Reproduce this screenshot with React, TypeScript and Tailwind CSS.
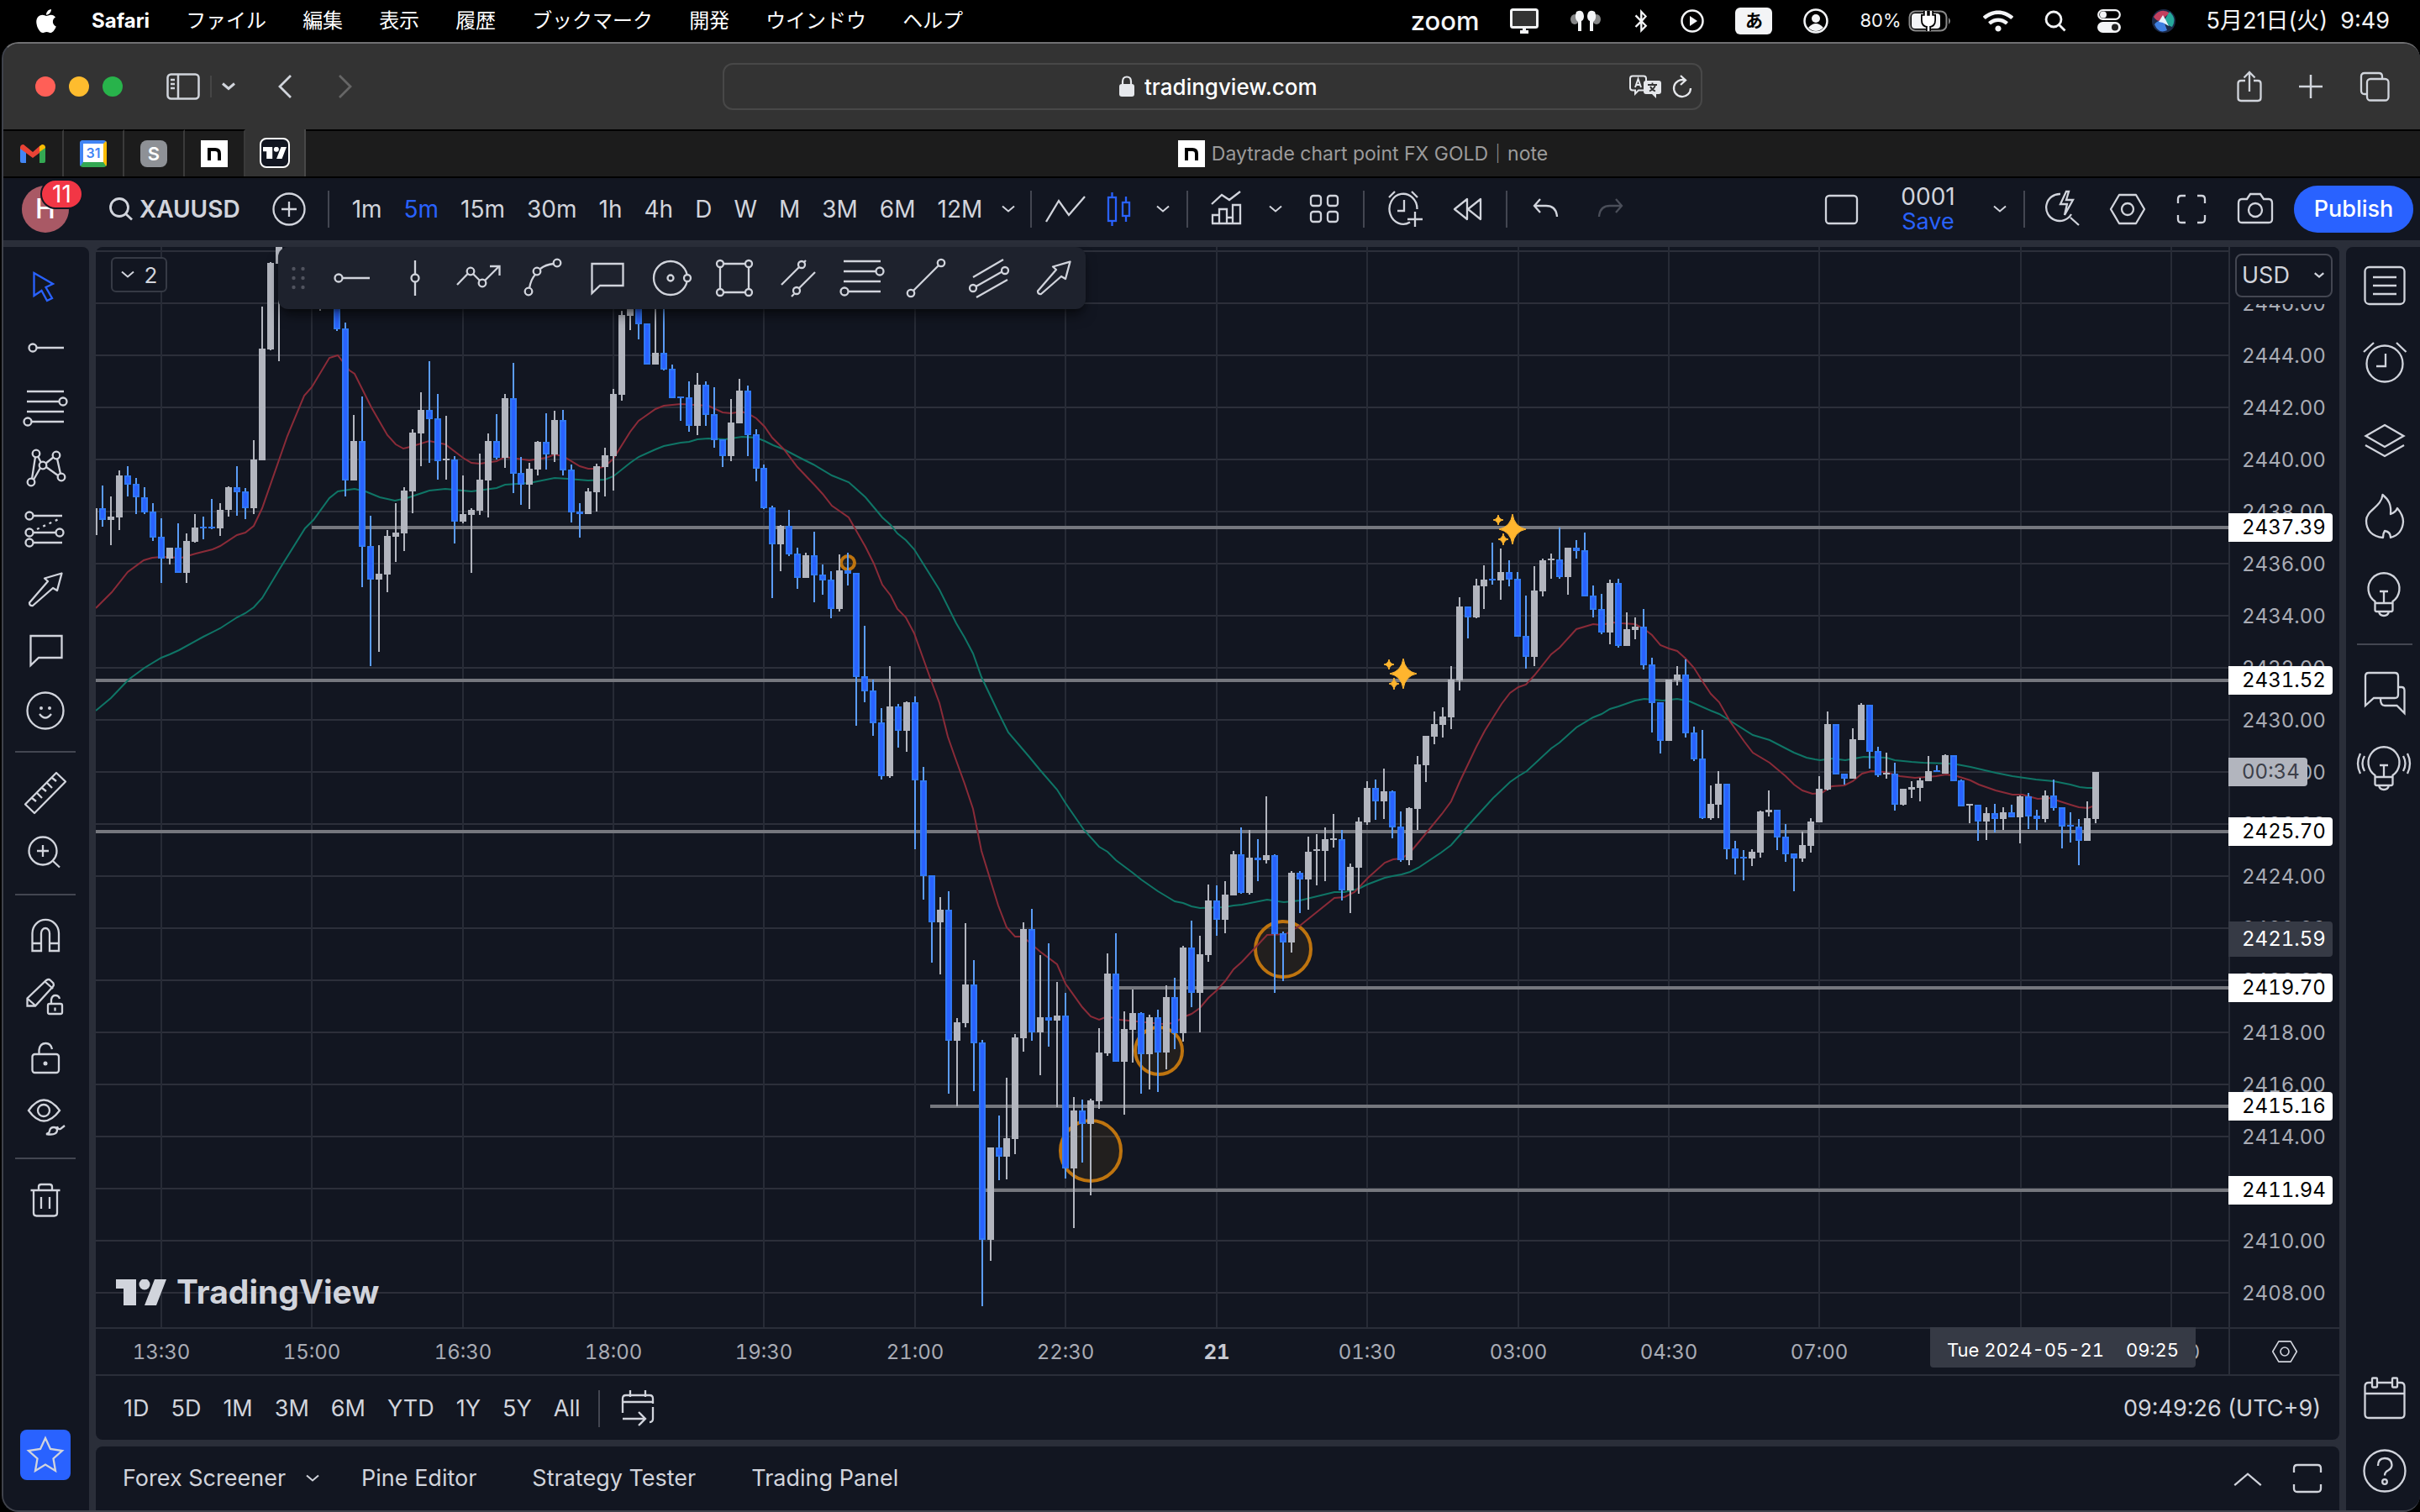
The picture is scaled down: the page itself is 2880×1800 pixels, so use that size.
import type { ReactNode } from "react";
import clsx from "clsx";
import { FaApple, FaBluetoothB, FaWifi } from "react-icons/fa";

type Candle = ["u" | "d", number, number, number, number];

// chart space: one unit is one pixel of the full-size window
const CHART = { x: 114, y: 294, w: 2538, h: 1286 };

const FIRST_INDEX = -8;
const candleX = (i: number) => Math.round(192 + (i + FIRST_INDEX) * 9.965);
const priceY = (price: number) => 361 + (2446 - price) * 31;

// direction, high, body top, body bottom, low
const candles: Candle[] = [
  ["u", 605, 605, 637, 637], ["d", 578, 605, 619, 627], ["u", 591, 615, 619, 649], ["u", 560, 566, 616, 631],
  ["d", 555, 566, 577, 591], ["d", 569, 576, 592, 612], ["d", 580, 592, 610, 612], ["d", 599, 609, 640, 644],
  ["d", 617, 639, 665, 694], ["u", 652, 652, 665, 672], ["d", 623, 652, 682, 682], ["u", 635, 644, 682, 694],
  ["u", 612, 628, 645, 646], ["d", 615, 627, 629, 642], ["d", 594, 627, 629, 630], ["u", 599, 607, 629, 638],
  ["u", 579, 580, 607, 615], ["d", 555, 580, 586, 614], ["d", 581, 585, 605, 618], ["u", 524, 547, 605, 612],
  ["u", 365, 415, 548, 548], ["u", 312, 313, 416, 417], ["u", 280, 284, 314, 430], ["d", 296, 300, 330, 350],
  ["u", 296, 305, 340, 352], ["d", 298, 305, 335, 350], ["u", 300, 310, 340, 355], ["u", 300, 312, 350, 370],
  ["d", 300, 312, 340, 360], ["d", 310, 330, 392, 394], ["d", 384, 391, 572, 591], ["u", 494, 525, 572, 572],
  ["d", 472, 525, 651, 699], ["d", 614, 650, 690, 793], ["u", 649, 683, 690, 776], ["u", 631, 638, 684, 705],
  ["u", 599, 634, 639, 669], ["u", 580, 584, 635, 656], ["u", 511, 515, 585, 611], ["u", 467, 488, 516, 555],
  ["d", 430, 488, 499, 551], ["d", 469, 498, 549, 571], ["u", 495, 546, 548, 571], ["d", 543, 547, 621, 647],
  ["u", 566, 612, 621, 623], ["u", 605, 607, 613, 682], ["u", 540, 571, 608, 613], ["u", 516, 525, 572, 616],
  ["d", 493, 525, 545, 547], ["u", 469, 474, 545, 557], ["d", 432, 474, 564, 587], ["d", 544, 563, 577, 601],
  ["u", 551, 558, 577, 606], ["u", 525, 526, 559, 566], ["d", 492, 526, 541, 559], ["u", 489, 500, 541, 550],
  ["d", 488, 500, 560, 566], ["d", 553, 559, 610, 622], ["d", 599, 609, 612, 640], ["u", 581, 585, 612, 612],
  ["u", 552, 555, 586, 609], ["u", 533, 542, 556, 591], ["u", 463, 469, 543, 584], ["u", 370, 375, 470, 477],
  ["u", 340, 350, 376, 393], ["d", 340, 350, 386, 404], ["d", 385, 385, 434, 434], ["u", 350, 420, 434, 434],
  ["d", 350, 420, 440, 441], ["d", 434, 439, 474, 474], ["d", 472, 472, 474, 501], ["d", 454, 473, 507, 514],
  ["u", 444, 458, 507, 518], ["d", 454, 458, 494, 507], ["d", 461, 493, 524, 533], ["d", 523, 523, 543, 556],
  ["u", 475, 503, 543, 549], ["u", 451, 465, 504, 504], ["d", 459, 465, 518, 543], ["d", 511, 517, 558, 573],
  ["d", 553, 557, 605, 606], ["d", 602, 604, 648, 712], ["u", 625, 626, 648, 680], ["d", 607, 626, 660, 662],
  ["d", 652, 659, 688, 701], ["u", 658, 661, 688, 688], ["d", 633, 661, 685, 717], ["d", 672, 684, 691, 708],
  ["d", 680, 690, 725, 736], ["u", 660, 679, 725, 728], ["d", 658, 679, 683, 697], ["d", 682, 682, 806, 864],
  ["d", 745, 805, 823, 836], ["d", 809, 822, 861, 876], ["d", 843, 860, 924, 928], ["u", 793, 841, 924, 926],
  ["d", 838, 841, 870, 890], ["u", 835, 836, 870, 895], ["d", 829, 836, 929, 1011], ["d", 913, 929, 1043, 1071],
  ["d", 1042, 1042, 1098, 1146], ["u", 1068, 1083, 1098, 1160], ["d", 1061, 1083, 1239, 1302], ["u", 1212, 1217, 1239, 1317],
  ["u", 1099, 1172, 1218, 1223], ["d", 1143, 1172, 1242, 1299], ["d", 1238, 1241, 1476, 1555], ["u", 1366, 1366, 1476, 1501],
  ["d", 1328, 1366, 1377, 1405], ["u", 1283, 1355, 1377, 1404], ["u", 1231, 1235, 1356, 1374], ["u", 1098, 1106, 1236, 1252],
  ["d", 1082, 1106, 1229, 1239], ["u", 1137, 1211, 1229, 1280], ["d", 1123, 1211, 1215, 1246], ["u", 1169, 1209, 1215, 1318],
  ["d", 1182, 1209, 1391, 1403], ["u", 1306, 1322, 1391, 1462], ["d", 1309, 1322, 1338, 1384], ["u", 1308, 1310, 1338, 1423],
  ["u", 1224, 1253, 1311, 1320], ["u", 1135, 1159, 1254, 1257], ["d", 1111, 1159, 1264, 1264], ["u", 1204, 1225, 1264, 1327],
  ["u", 1178, 1206, 1226, 1265], ["d", 1205, 1206, 1255, 1302], ["u", 1208, 1211, 1255, 1297], ["d", 1202, 1211, 1253, 1300],
  ["u", 1173, 1187, 1253, 1273], ["d", 1164, 1187, 1230, 1249], ["u", 1126, 1128, 1230, 1240], ["d", 1096, 1128, 1182, 1199],
  ["u", 1114, 1136, 1182, 1229], ["u", 1053, 1072, 1137, 1145], ["d", 1054, 1072, 1095, 1114], ["u", 1049, 1065, 1095, 1111],
  ["u", 1013, 1017, 1066, 1066], ["d", 985, 1017, 1063, 1064], ["u", 988, 1021, 1063, 1065], ["d", 999, 1021, 1024, 1049],
  ["u", 948, 1018, 1024, 1028], ["d", 1017, 1018, 1112, 1182], ["d", 1109, 1111, 1122, 1168], ["u", 1037, 1039, 1122, 1134],
  ["d", 1037, 1039, 1047, 1087], ["u", 996, 1014, 1047, 1083], ["u", 993, 1011, 1013, 1054], ["u", 985, 999, 1013, 1049],
  ["u", 969, 998, 1000, 1009], ["d", 988, 999, 1060, 1072], ["u", 1028, 1032, 1060, 1087], ["u", 973, 978, 1033, 1064],
  ["u", 930, 938, 979, 982], ["d", 928, 938, 954, 976], ["u", 915, 942, 954, 975], ["d", 941, 942, 985, 998],
  ["d", 966, 984, 1024, 1026], ["u", 961, 962, 1024, 1030], ["u", 900, 910, 963, 988], ["u", 876, 876, 911, 931],
  ["u", 847, 862, 877, 886], ["u", 842, 853, 863, 878], ["u", 793, 809, 854, 868], ["u", 711, 722, 810, 822],
  ["d", 722, 722, 735, 760], ["u", 689, 697, 735, 736], ["u", 673, 690, 698, 725], ["d", 646, 689, 691, 696],
  ["u", 653, 681, 691, 714], ["d", 667, 681, 690, 698], ["d", 681, 689, 758, 758], ["d", 709, 757, 782, 796],
  ["u", 674, 703, 782, 793], ["u", 665, 667, 704, 710], ["u", 659, 665, 667, 689], ["d", 628, 666, 687, 689],
  ["u", 652, 652, 687, 708], ["d", 643, 652, 656, 665], ["d", 634, 655, 710, 710], ["d", 697, 709, 726, 735],
  ["d", 707, 725, 753, 755], ["u", 690, 694, 753, 767], ["d", 689, 694, 769, 771], ["u", 729, 749, 769, 769],
  ["u", 735, 746, 750, 761], ["d", 725, 746, 792, 797], ["d", 783, 791, 837, 872], ["d", 836, 836, 882, 897],
  ["u", 809, 809, 882, 882], ["u", 793, 803, 810, 816], ["d", 785, 803, 873, 878], ["d", 865, 872, 904, 906],
  ["d", 869, 903, 974, 975], ["u", 935, 957, 974, 976], ["u", 918, 933, 958, 974], ["d", 933, 933, 1011, 1023],
  ["d", 1001, 1010, 1022, 1041], ["d", 1012, 1020, 1022, 1048], ["u", 1011, 1014, 1022, 1031], ["u", 965, 966, 1015, 1021],
  ["u", 941, 964, 967, 972], ["d", 964, 964, 997, 1012], ["d", 981, 996, 1017, 1026], ["d", 1016, 1016, 1022, 1061],
  ["u", 990, 1006, 1022, 1026], ["u", 974, 978, 1007, 1015], ["u", 924, 939, 979, 979], ["u", 847, 862, 940, 941],
  ["d", 862, 862, 922, 922], ["d", 921, 921, 927, 934], ["u", 867, 880, 927, 927], ["u", 837, 839, 881, 881],
  ["d", 839, 839, 895, 915], ["d", 889, 894, 923, 925], ["u", 896, 920, 922, 927], ["d", 908, 921, 958, 965],
  ["u", 939, 939, 958, 959], ["u", 930, 937, 940, 950], ["u", 926, 929, 938, 954], ["u", 900, 918, 930, 930],
  ["d", 911, 917, 919, 919], ["u", 898, 899, 921, 921], ["d", 899, 899, 930, 930], ["d", 928, 929, 960, 960],
  ["u", 957, 957, 959, 980], ["d", 958, 958, 978, 1001], ["u", 961, 968, 978, 1000], ["d", 957, 968, 975, 991],
  ["u", 961, 967, 975, 988], ["d", 958, 967, 973, 973], ["u", 947, 948, 973, 1004], ["d", 944, 948, 972, 987],
  ["d", 964, 971, 975, 988], ["u", 941, 947, 975, 979], ["d", 928, 947, 962, 965], ["d", 961, 961, 984, 1010],
  ["d", 967, 982, 984, 1003], ["d", 975, 984, 1001, 1030], ["u", 954, 974, 1001, 1001], ["u", 919, 919, 975, 980],
];

const fastAverage =
  "114,724 133,705 152,681 171,667 181,664 192,663 216,664 233,659 253,654 262,650 282,637 292,634 302,626 312,605 342,519 362,471 371,461 392,426 402,423 416,441 422,445 442,485 461,518 471,529 480,534 488,532 511,525 530,529 551,545 561,551 571,552 591,549 601,544 630,548 650,545 660,541 670,543 690,555 700,558 710,558 720,555 730,546 750,514 760,501 780,487 790,483 810,481 843,483 860,491 870,492 883,490 893,494 900,498 910,508 919,521 933,535 949,556 969,577 979,588 990,602 1010,616 1030,651 1040,671 1050,696 1060,709 1068,725 1078,735 1088,754 1098,782 1108,810 1118,837 1128,877 1136,900 1148,933 1158,963 1168,1013 1188,1078 1198,1104 1208,1115 1217,1115 1223,1120 1238,1133 1258,1148 1268,1171 1288,1199 1298,1210 1308,1214 1318,1210 1333,1214 1383,1219 1397,1218 1408,1211 1418,1207 1428,1200 1438,1188 1448,1179 1458,1168 1468,1154 1478,1145 1508,1113 1530,1112 1547,1102 1588,1069 1600,1068 1612,1062 1628,1045 1648,1027 1658,1023 1668,1022 1678,1015 1688,1003 1716,969 1727,954 1737,931 1747,910 1757,889 1767,870 1787,838 1797,825 1807,818 1816,815 1826,804 1846,779 1856,771 1876,749 1886,746 1896,743 1905,744 1920,741 1930,742 1946,743 1957,749 1966,756 1976,768 1986,772 1996,775 2006,784 2016,795 2026,811 2036,826 2046,836 2059,859 2076,883 2086,896 2106,908 2125,924 2135,934 2145,941 2157,945 2168,944 2180,936 2195,935 2205,930 2216,921 2227,918 2243,919 2261,924 2279,926 2304,924 2316,922 2329,924 2345,929 2355,934 2375,941 2395,946 2407,946 2425,951 2439,950 2464,958 2474,961 2485,962 2490,960";

const slowAverage =
  "114,846 132,831 153,809 172,795 192,783 202,779 213,774 242,758 262,748 282,735 292,730 302,723 312,712 333,677 363,629 373,619 392,593 402,585 408,584 422,582 435,585 452,592 470,596 484,593 511,584 530,582 561,585 591,581 601,577 630,575 660,569 676,570 700,572 720,571 730,567 750,551 760,544 780,535 790,531 810,527 820,526 830,523 843,522 863,523 883,520 900,521 910,525 920,530 933,535 952,545 968,553 990,566 1010,574 1030,592 1040,604 1050,616 1060,625 1068,635 1078,643 1088,654 1098,670 1118,702 1128,722 1138,742 1148,759 1158,778 1168,806 1188,848 1200,872 1224,900 1238,917 1258,940 1268,956 1290,988 1308,1008 1318,1014 1328,1024 1348,1039 1358,1047 1368,1054 1378,1061 1388,1067 1398,1073 1408,1075 1418,1079 1428,1081 1457,1080 1468,1078 1478,1077 1508,1071 1528,1074 1547,1072 1588,1062 1600,1062 1617,1058 1627,1053 1648,1045 1657,1043 1668,1041 1678,1038 1688,1033 1715,1015 1727,1006 1741,990 1757,972 1777,950 1797,931 1807,924 1817,918 1846,891 1856,884 1876,866 1896,854 1906,850 1916,844 1926,841 1946,834 1957,832 1979,834 1996,832 2011,835 2036,846 2046,850 2059,858 2086,875 2096,878 2106,881 2135,896 2150,902 2160,904 2166,905 2180,903 2196,905 2207,903 2218,901 2245,902 2255,905 2275,907 2289,908 2318,909 2329,910 2345,913 2375,920 2395,924 2423,928 2444,930 2464,934 2475,937 2484,938 2490,938";

const levels = [
  { price: "2437.39", from: 371, y: 628 },
  { price: "2431.52", from: 114, y: 810 },
  { price: "2425.70", from: 114, y: 990 },
  { price: "2419.70", from: 1318, y: 1176 },
  { price: "2415.16", from: 1107, y: 1317 },
  { price: "2411.94", from: 1169, y: 1417 },
];

const circles = [
  { x: 1009, y: 670, r: 8 },
  { x: 1298, y: 1370, r: 36 },
  { x: 1379, y: 1251, r: 28 },
  { x: 1527, y: 1130, r: 33 },
];

const timeTicks = [
  { x: 192, label: "13:30" },
  { x: 371, label: "15:00" },
  { x: 551, label: "16:30" },
  { x: 730, label: "18:00" },
  { x: 909, label: "19:30" },
  { x: 1089, label: "21:00" },
  { x: 1268, label: "22:30" },
  { x: 1448, label: "21", strong: true },
  { x: 1627, label: "01:30" },
  { x: 1807, label: "03:00" },
  { x: 1986, label: "04:30" },
  { x: 2165, label: "07:00" },
  { x: 2405, label: "" },
  { x: 2584, label: "10:30" },
];

const priceTicks = Array.from({ length: 20 }, (_, i) => 2446 - i * 2);

// these ticks sit completely behind a tag on the price axis
const coveredTicks = [2412];

/* ---------- icons ---------- */

function Icon({ children, className = "size-14" }: { children: ReactNode; className?: string }) {
  return (
    <svg viewBox="0 0 56 56" className={clsx("shrink-0", className)} fill="none" stroke="currentColor" strokeWidth="2.3" aria-hidden="true">
      {children}
    </svg>
  );
}

const icons = {
  cursor: <path d="M14.5 11 37 24l-8.500 4L36 41l-6 3-6.500-12-9 6Z" />,
  ray: <><circle cx="13" cy="28" r="4.500" /><path d="M17.500 28H50" /></>,
  vertical: <><circle cx="28" cy="28" r="4.500" /><path d="M28 7v16.500M28 32.500V49" /></>,
  fib: <><path d="M6 8h44M6 20h38.500M6 32h44M12 44h38" /><circle cx="49" cy="20" r="4.500" /><circle cx="7" cy="44" r="4.500" /></>,
  pattern: (
    <>
      <path d="M16 14 12 40M19 13l4 8M28 22l10-8M22 27 14 41M42 16l4 18M29 26l14 10" />
      <circle cx="17" cy="10" r="4.300" /><circle cx="41" cy="12" r="4.300" /><circle cx="25" cy="24" r="4.300" />
      <circle cx="11" cy="44" r="4.300" /><circle cx="47" cy="38" r="4.300" />
    </>
  ),
  forecast: (
    <>
      <path d="M14 12h34M14 32h26M14 44h34" /><path d="m18 28 28-13" strokeDasharray="3 5" />
      <circle cx="9" cy="12" r="4.500" /><circle cx="9" cy="32" r="4.500" /><circle cx="45" cy="32" r="4.500" /><circle cx="9" cy="44" r="4.500" />
    </>
  ),
  arrow: <path d="M47.500 8.500 27 14.500l4 3.500L9 43.500q0 4 4 3.500l24-21 5 3Z" strokeLinejoin="round" />,
  comment: <path d="M10.500 11h37v26H20l-9.500 9Z" />,
  smiley: (
    <>
      <circle cx="28" cy="28" r="21.500" /><path d="M21 32q7 9 14 0" />
      <circle cx="23" cy="25" r="2" fill="currentColor" stroke="none" /><circle cx="33" cy="25" r="2" fill="currentColor" stroke="none" />
    </>
  ),
  ruler: <path d="m41 4 11 10.500L15 52 4 41.500ZM12 34l5 4M18 28l6 6M24 22l5 4M30 16l6 6M36 10l5 4" strokeLinejoin="round" />,
  zoomIn: <><circle cx="25" cy="25" r="16.500" /><path d="M25 18v14M18 25h14M37 37l8 7.500" /></>,
  magnet: <path d="M12.500 46V25a15.700 16 0 0 1 31.500 0v21H33V25a5 6 0 0 0-10 0v21ZM12.500 37H23M33 37h11" />,
  pencilLock: (
    <>
      <path d="M6.500 39.500v-9L29 9q3-2 5 0l3.500 3.500q1 2-.5 4L16 39.500ZM7 31l9 8M28 11l9 8" />
      <rect x="31" y="37" width="17" height="12" rx="2" /><path d="M35 37v-5q1-5 5-5 4 0 5 4" /><path d="M39.500 41.500v4" />
    </>
  ),
  lock: (
    <>
      <rect x="12.500" y="25" width="31.500" height="22" rx="3" /><path d="M20.500 25v-5q1-8 8-8 6 0 7.500 7" />
      <circle cx="28" cy="36" r="2.500" fill="currentColor" stroke="none" />
    </>
  ),
  eyeBrush: (
    <>
      <path d="M8 20Q26-5 45 20 26 45 8 20Z" /><circle cx="26" cy="20" r="7" />
      <path d="M29 48q4-1 4-4 1-4 5-4t4 4q-1 6-13 4ZM42 39q1 4 4 3l5-4" />
    </>
  ),
  trash: <path d="M10.500 17h35M20 17v-4q0-3 3-3h10q3 0 3 3v4M14 17v27q0 3.500 3.500 3.500h21q3.500 0 3.500-3.500V17M23 25v14M33 25v14" />,
  star: <path d="m28 8 6 13 14 2-10.500 9.500L40 47l-12-7.500L16 47l2.500-14.500L8 23l14-2Z" />,
  list: <><rect x="4.500" y="6" width="47" height="44" rx="5" /><path d="M14 18h28M14 28h28M14 38h28" /></>,
  alarm: <><circle cx="28" cy="29" r="21.500" /><path d="M29 17v15H18M3 15 15 4M42 4l11.500 11" /></>,
  alarmPlus: <><path d="M36 43.500A16.500 18 0 1 1 44.500 28M29 17v13h-8M11 14l7-7M38 7l7 7M42 31v18M33 40h18" /></>,
  layers: <path d="m28 10 22.500 13L28 36 5.500 23ZM5 34l23 13 23-13" />,
  flame: <path d="M25.500 1C33 7 36 13 35 24q6-2 8-7 7 8 7 16-1 15-15 19 0-7-7-8-2 3-2 8C13 51 6 43 6 32 6 19 24 16 25.500 1Z" strokeLinejoin="round" />,
  bulb: <path d="M16.500 38V36A18.500 18.500 0 1 1 37.500 36v10q0 2-2 2h-17q-2 0-2-2V38h21M21 48q1 5 6 5t6-5M27 38V24M22 24h10" />,
  bulbSignal: (
    <g>
      <path d="M16.500 38V36A18.500 18.500 0 1 1 37.500 36v10q0 2-2 2h-17q-2 0-2-2V38h21M21 48q1 5 6 5t6-5M27 38V24M22 24h10" />
      <path d="M4 13q-5 9 0 18M-1 10q-6 12 0 24M50 13q5 9 0 18M55 10q6 12 0 24" />
    </g>
  ),
  chat: <path d="M5 43V8q0-4 4-4h31q4 0 4 4v22q0 4-4 4H15ZM44 21h4q3.500 0 3.500 4v27l-9-9H28q-5 0-5-8" />,
  calendar: (
    <>
      <path d="M13 9H9q-4.500 0-4.500 4.500v33Q4.500 51 9 51h38q4.500 0 4.500-4.500v-33Q51.500 9 47 9h-4M19 9h17M4.500 22h47" />
      <rect x="13" y="3.500" width="6" height="11" rx="1" /><rect x="37" y="3.500" width="6" height="11" rx="1" />
    </>
  ),
  help: <><circle cx="28" cy="28" r="24.500" /><path d="M20 22q0-9 8-9t8.500 8q0 4-4.500 6.500-4 2-4 6" /><circle cx="28" cy="41" r="2.800" /></>,
  zigzag: <><path d="m2 36 12.500-13M21 23l8 8M35 31l17-17M41 14h11.500v11" /><circle cx="18" cy="20" r="4.300" /><circle cx="32" cy="34" r="4.300" /></>,
  curve: <><path d="M12 40q2-11 7-16M25 17q6-5 16-6" /><circle cx="11" cy="44" r="4.300" /><circle cx="21" cy="20" r="4.300" /><circle cx="45" cy="10" r="4.300" /></>,
  circleTool: <><circle cx="28" cy="28" r="20" /><circle cx="28" cy="28" r="3.500" /><circle cx="48" cy="28" r="4" className="fill-[#1e222d]" /></>,
  square: (
    <>
      <path d="M15 11h26M15 45h26M11 15v26M45 15v26" />
      <circle cx="11" cy="11" r="4" /><circle cx="45" cy="11" r="4" /><circle cx="11" cy="45" r="4" /><circle cx="45" cy="45" r="4" />
    </>
  ),
  parallel: <><path d="m8 36 21-21M35 9l2-2M20 50l3-3M29 40l19-19" /><circle cx="32" cy="12" r="4" /><circle cx="26" cy="43" r="4" /></>,
  trend: <><path d="m13 43 30-30" /><circle cx="10" cy="46" r="4.200" /><circle cx="46" cy="10" r="4.200" /></>,
  channel: <><path d="m8 27 36-21M8 40l37-21M12 51l37-21" /><circle cx="8" cy="40" r="4" className="fill-[#1e222d]" /><circle cx="46" cy="19" r="4" className="fill-[#1e222d]" /></>,
  lineChart: <path d="m5 43 15-25 12 17L51 13" />,
  candlesIcon: <><rect x="15" y="14" width="9" height="28" /><path d="M19.500 8v6M19.500 42v6" /><rect x="32" y="20" width="8" height="16" /><path d="M36 13v7M36 36v7" /></>,
  indicators: <path d="m10 22 12-11 9 6L44 7M11 45V35h8v10M19 45V28h9v17M28 38h7v7M35 45V23h9v22H10" />,
  grid: (
    <>
      <rect x="12" y="12" width="12" height="12" rx="3" /><rect x="32" y="12" width="12" height="12" rx="3" />
      <rect x="12" y="31" width="12" height="12" rx="3" /><rect x="32" y="31" width="12" height="12" rx="3" />
    </>
  ),
  rewind: <path d="M28 16v24L13 28ZM44 16v24L29 28Z" strokeLinejoin="round" />,
  undo: <path d="m21 16-7 8 7 8M14 24h14q12 0 13 13" />,
  redo: <path d="m35 16 7 8-7 8M42 24H28q-12 0-13 13" />,
  frame: <rect x="10" y="12" width="37" height="33" rx="4" />,
  quickSearch: <path d="M24 10a16 16 0 1 0 13 24M36 38l10 9M31 7l-7 15h8l-3 13 10-18h-8l3-10Z" />,
  hexagon: <><path d="M18 11h20l10 17-10 17H18L8 28Z" strokeLinejoin="round" /><circle cx="28" cy="28" r="7" /></>,
  fullscreen: <path d="M12 21v-5q0-4 4-4h5M35 12h5q4 0 4 4v5M44 35v5q0 4-4 4h-5M21 44h-5q-4 0-4-4v-5" />,
  camera: <><path d="M8 21q0-5 4-5h6l4-6h12l4 6h6q4 0 4 5v19q0 4-4 4H12q-4 0-4-4Z" /><circle cx="28" cy="29" r="8" /></>,
  gotoDate: <path d="M9 33V16q0-4 4-4h28q4 0 4 4v6M9 20h36M18 6v8M36 6v8M9 40h26M28 32l8 8-8 8M45 26v14q0 4-4 4" />,
  panel: <path d="M12 21v-5q0-4 4-4h24q4 0 4 4v5M44 35v5q0 4-4 4H16q-4 0-4-4v-5" />,
};

type IconName = keyof typeof icons;

function Chevron({ className = "w-4" }: { className?: string }) {
  return (
    <svg viewBox="0 0 16 10" className={className} fill="none" stroke="currentColor" strokeWidth="2" aria-hidden="true">
      <path d="m1 1.500 7 6 7-6" />
    </svg>
  );
}

function TradingViewMark({ className }: { className: string }) {
  return (
    <svg viewBox="0 0 60 31" className={className} fill="currentColor" aria-hidden="true">
      <path d="M0 0h24v31H9V11H0ZM46 0h14L48 31H34Z" />
      <circle cx="34" cy="6" r="6.500" />
    </svg>
  );
}

function NoteMark() {
  return (
    <svg viewBox="0 0 32 32" className="size-8 bg-white" fill="none" stroke="#000" strokeWidth="4" aria-hidden="true">
      <path d="M10 24V11h7q5 0 5 5v8" />
    </svg>
  );
}

/* ---------- macOS menu bar ---------- */

const menus = ["ファイル", "編集", "表示", "履歴", "ブックマーク", "開発", "ウインドウ", "ヘルプ"];

function MenuBar() {
  return (
    <header className="flex h-[50px] shrink-0 items-center justify-between bg-black pl-[38px] pr-9 text-2xl text-white">
      <nav className="flex items-center gap-[43px] whitespace-nowrap">
        <FaApple className="-mr-1 h-8 w-[30px]" />
        <button className="font-bold">Safari</button>
        {menus.map((menu) => (
          <button key={menu}>{menu}</button>
        ))}
      </nav>
      <div className="flex items-center gap-[37px] whitespace-nowrap text-gray-100">
        <span className="text-[31px] font-medium leading-8">zoom</span>
        <svg viewBox="0 0 34 30" className="w-[34px]" aria-hidden="true">
          <rect x="1.500" y="1.500" width="31" height="21" rx="2" fill="#333" stroke="currentColor" strokeWidth="3" />
          <path d="M12 28h10M17 22v6" stroke="currentColor" strokeWidth="4" />
        </svg>
        <svg viewBox="0 0 38 28" className="w-[38px]" fill="currentColor" aria-hidden="true">
          <ellipse cx="6" cy="12" rx="5" ry="6" opacity=".55" /><ellipse cx="32" cy="12" rx="5" ry="6" opacity=".55" />
          <path d="M8 3q8-4 9 5 0 5-3 6v12h-4V15Q5 11 8 3ZM30 3q-8-4-9 5 0 5 3 6v12h4V15q5-4 2-12Z" />
        </svg>
        <FaBluetoothB className="h-7 w-5" />
        <svg viewBox="0 0 28 28" className="size-7" aria-hidden="true">
          <circle cx="14" cy="14" r="12.500" fill="none" stroke="currentColor" strokeWidth="2.500" />
          <path d="m11 8 9 6-9 6Z" fill="currentColor" />
        </svg>
        <span className="flex h-8 w-11 items-center justify-center rounded-md bg-gray-100 text-[21px] font-bold text-black">あ</span>
        <svg viewBox="0 0 30 30" className="w-[30px]" aria-hidden="true">
          <circle cx="15" cy="15" r="13.500" fill="none" stroke="currentColor" strokeWidth="2.500" />
          <circle cx="15" cy="12" r="5" fill="currentColor" />
          <path d="M6 23q9-10 18 0-9 8-18 0Z" fill="currentColor" />
        </svg>
        <span className="flex items-center gap-2">
          <span className="text-[22px]">80%</span>
          <svg viewBox="0 0 52 26" className="w-[52px]" aria-hidden="true">
            <rect x="1.500" y="1.500" width="44" height="23" rx="7" fill="none" stroke="#8a8a8a" strokeWidth="2" />
            <path d="M48 9q4 4 0 8Z" fill="#8a8a8a" />
            <rect x="4" y="4" width="34" height="18" rx="4" fill="currentColor" />
            <path d="M21 1v7M27 1v7M18 8h12v4q0 6-6 6t-6-6ZM24 18v7" fill="none" stroke="#000" strokeWidth="6" />
            <path d="M21 1v7M27 1v7M18 8h12v4q0 6-6 6t-6-6ZM24 18v7" fill="#fff" stroke="#fff" strokeWidth="2.500" />
          </svg>
        </span>
        <FaWifi className="h-8 w-9" />
        <svg viewBox="0 0 26 26" className="w-[26px]" fill="none" stroke="currentColor" strokeWidth="2.800" aria-hidden="true">
          <circle cx="11" cy="11" r="9" /><path d="m17.500 17.500 7 7" />
        </svg>
        <svg viewBox="0 0 28 28" className="size-7" aria-hidden="true">
          <rect x="1.200" y="1.200" width="25.600" height="10.600" rx="5.300" fill="none" stroke="currentColor" strokeWidth="2.200" />
          <circle cx="7" cy="6.500" r="4" fill="currentColor" />
          <rect y="15" width="28" height="13" rx="6.500" fill="currentColor" /><circle cx="21" cy="21.500" r="4" fill="#222" />
        </svg>
        <svg viewBox="0 0 28 28" className="size-7" aria-hidden="true">
          <circle cx="14" cy="14" r="14" fill="#1c2b4a" />
          <path d="M2 9q8-12 20-4-8 3-8 9-8 2-12-5Z" fill="#c2405f" />
          <path d="M21 3q9 8 3 18-7-2-10-7Z" fill="#25a89b" />
          <path d="M3 18q4-6 11-4l4 11q-10 5-15-7Z" fill="#3f7fe0" />
          <path d="m13 7 3 5 4 8-7-4-5-1Z" fill="#e8f4ff" />
        </svg>
        <span className="text-[27px]">5月21日(火)&nbsp; 9:49</span>
      </div>
    </header>
  );
}

/* ---------- browser chrome ---------- */

function BrowserToolbar() {
  return (
    <div className="flex h-[102px] items-center bg-[#333333] pl-[38px] pr-9 text-gray-300">
      <div className="flex flex-1 items-center">
        <div className="flex gap-4">
          <button aria-label="Close" className="size-6 rounded-full bg-[#ff5f57]" />
          <button aria-label="Minimize" className="size-6 rounded-full bg-[#febc2e]" />
          <button aria-label="Zoom" className="size-6 rounded-full bg-[#28b34b]" />
        </div>
        <button aria-label="Sidebar" className="ml-[52px] pr-3">
          <svg viewBox="0 0 40 32" className="h-8 w-10" fill="none" stroke="currentColor" strokeWidth="2.500" aria-hidden="true">
            <rect x="1.500" y="1.500" width="37" height="29" rx="4" /><path d="M14 2v28M5 8h5M5 13h5M5 18h5" />
          </svg>
        </button>
        <button aria-label="Tab groups" className="border-l-2 border-[#464646] py-2 pl-3">
          <Chevron className="w-4 stroke-3" />
        </button>
        <button aria-label="Back" className="ml-[50px]">
          <svg viewBox="0 0 18 30" className="h-[30px] w-[18px]" fill="none" stroke="currentColor" strokeWidth="2.800" aria-hidden="true"><path d="M16 2 3 15l13 13" /></svg>
        </button>
        <button aria-label="Forward" className="ml-[54px] text-[#666666]">
          <svg viewBox="0 0 18 30" className="h-[30px] w-[18px]" fill="none" stroke="currentColor" strokeWidth="2.800" aria-hidden="true"><path d="m2 2 13 13L2 28" /></svg>
        </button>
      </div>
      <div className="flex h-14 w-[1166px] items-center rounded-xl border-2 border-[#484848] px-2.5 text-gray-200">
        <div className="ml-24 flex flex-1 items-center justify-center gap-3">
          <svg viewBox="0 0 18 26" className="h-[26px] w-[18px]" aria-hidden="true">
            <rect y="10" width="18" height="15" rx="3" fill="currentColor" />
            <path d="M4 11V7q0-5.500 5-5.500T14 7v4" fill="none" stroke="currentColor" strokeWidth="2.200" />
          </svg>
          <input aria-label="Address" defaultValue="tradingview.com" className="w-[212px] bg-transparent text-[26px] font-medium text-white outline-none" />
        </div>
        <div className="flex items-center gap-3">
          <svg viewBox="0 0 40 28" className="h-7 w-10" aria-hidden="true">
            <path d="M5 1.500h13q3 0 3 3v11q0 3-3 3h-6l-4 4v-4H5q-3 0-3-3v-11q0-3 3-3ZM8 15l3.500-10L15 15M9 12h5" fill="none" stroke="currentColor" strokeWidth="2" />
            <path d="M21 7h15q3 0 3 3v10q0 3-3 3h-3v5l-5-5h-7q-3 0-3-3V10q0-3 3-3Z" fill="currentColor" />
            <path d="M23 12h11M28.500 9.500V12M25 19.500q6-3 7-7.500M26 14q2 4 6 5.500" fill="none" stroke="#333" strokeWidth="1.800" />
          </svg>
          <button aria-label="Reload">
            <svg viewBox="0 0 24 28" className="h-7 w-6" fill="none" stroke="currentColor" strokeWidth="2.300" aria-hidden="true"><path d="M15 6.500A10 10 0 1 0 22 16M10 1l6 5.500L10 12" /></svg>
          </button>
        </div>
      </div>
      <div className="flex flex-1 items-center justify-end gap-11">
        <button aria-label="Share">
          <svg viewBox="0 0 30 38" className="h-[38px] w-[30px]" fill="none" stroke="currentColor" strokeWidth="2.300" aria-hidden="true"><path d="M10 12H5q-3.500 0-3.500 3.500v17Q1.500 36 5 36h20q3.500 0 3.500-3.500v-17Q28.500 12 25 12h-5M15 25V2M8.500 8.500 15 2l6.500 6.500" /></svg>
        </button>
        <button aria-label="New tab">
          <svg viewBox="0 0 28 28" className="size-7" fill="none" stroke="currentColor" strokeWidth="2.500" aria-hidden="true"><path d="M14 0v28M0 14h28" /></svg>
        </button>
        <button aria-label="Tab overview">
          <svg viewBox="0 0 36 36" className="size-9" fill="none" stroke="currentColor" strokeWidth="2.300" aria-hidden="true"><rect x="9" y="9" width="25.500" height="25.500" rx="4" /><path d="M9 27H6q-4 0-4-4V6q0-4 4-4h17q4 0 4 4v3" /></svg>
        </button>
      </div>
    </div>
  );
}

function TabBar() {
  const pinned = "flex w-[72px] items-center justify-center border-r-2 border-r-[#3a3a3a] border-t-2 border-t-black";
  return (
    <div className="flex h-[58px] border-b-2 border-black bg-[#1c1c1c]">
      <button aria-label="Gmail" className={pinned}>
        <svg viewBox="0 0 30 22" className="w-[30px]" aria-hidden="true">
          <path d="M0 3v17q0 2 2 2h5V9Z" fill="#4285f4" /><path d="M30 3v17q0 2-2 2h-5V9Z" fill="#34a853" />
          <path d="m23 9 7-5q0-4-4-4l-3 2Z" fill="#fbbc04" /><path d="M0 4q0-4 4-4l11 9 8-7v8l-8 6L0 5Z" fill="#ea4335" />
        </svg>
      </button>
      <button aria-label="Calendar" className={pinned}>
        <span className="flex size-8 items-center justify-center rounded-sm border-4 border-b-6 border-[#4285f4] border-r-[#fbbc04] border-b-[#34a853] bg-white text-base font-semibold text-[#4285f4]">31</span>
      </button>
      <button className={pinned}>
        <span className="flex size-8 items-center justify-center rounded-lg bg-[#8e9196] text-[22px] font-semibold text-white">S</span>
      </button>
      <button aria-label="note" className={pinned}>
        <NoteMark />
      </button>
      <button aria-label="TradingView" className="flex w-[72px] items-center justify-center border-r-2 border-[#484848] bg-[#333333]">
        <span className="flex size-9 items-center justify-center rounded-lg border-2 border-white bg-[#121621] text-white">
          <TradingViewMark className="w-7" />
        </span>
      </button>
      <button className="flex flex-1 items-center justify-center gap-2 border-t-2 border-black text-[23px] text-[#9b9b9b]">
        <NoteMark />
        Daytrade chart point FX GOLD｜note
      </button>
    </div>
  );
}

/* ---------- TradingView ---------- */

const intervals = ["1m", "5m", "15m", "30m", "1h", "4h", "D", "W", "M", "3M", "6M", "12M"];

function Separator() {
  return <span className="mx-2 h-11 w-0.5 shrink-0 bg-[#434651]" />;
}

function IconButton({ name, label, className = "w-[76px]" }: { name: IconName; label: string; className?: string }) {
  return (
    <button aria-label={label} className={clsx("flex shrink-0 items-center justify-center", className)}>
      <Icon className="size-14 overflow-visible">{icons[name]}</Icon>
    </button>
  );
}

function MoreButton({ label, className = "w-10" }: { label: string; className?: string }) {
  return (
    <button aria-label={label} className={clsx("flex h-14 shrink-0 items-center justify-center", className)}>
      <Chevron />
    </button>
  );
}

function Header() {
  return (
    <div className="flex h-[74px] shrink-0 items-center bg-[#121621] text-[28px]">
      <button aria-label="Account" className="flex w-[100px] justify-center">
        <span className="relative flex size-14 items-center justify-center rounded-full bg-[#a95965] text-[32px] font-medium text-white">
          H
          <span className="absolute -top-2 left-[22px] flex h-9 items-center rounded-full border-2 border-[#121621] bg-[#f23645] px-3 text-[28px] font-normal">11</span>
        </span>
      </button>
      <button className="flex items-center gap-2 pl-[26px] pr-5 font-semibold">
        <svg viewBox="0 0 28 28" className="size-7" fill="none" stroke="currentColor" strokeWidth="2.800" aria-hidden="true">
          <circle cx="12" cy="12" r="10.500" /><path d="m19.500 19.500 7.500 7" />
        </svg>
        XAUUSD
      </button>
      <button aria-label="Compare" className="flex w-[76px] items-center justify-center">
        <Icon><circle cx="28" cy="28" r="18.500" /><path d="M28 19v18M19 28h18" /></Icon>
      </button>
      <Separator />
      <div className="flex pl-1.5 text-[28px]">
        {intervals.map((interval) => (
          <button key={interval} className={clsx("px-[13px]", interval === "5m" && "text-[#2962ff]")}>
            {interval}
          </button>
        ))}
      </div>
      <MoreButton label="More intervals" className="w-9" />
      <Separator />
      <IconButton name="lineChart" label="Line" className="w-16" />
      <IconButton name="candlesIcon" label="Candles" className="w-16 text-[#2962ff]" />
      <MoreButton label="Chart types" />
      <Separator />
      <IconButton name="indicators" label="Indicators" />
      <MoreButton label="Favorite indicators" />
      <IconButton name="grid" label="Templates" />
      <Separator />
      <IconButton name="alarmPlus" label="Create alert" />
      <IconButton name="rewind" label="Replay" />
      <Separator />
      <IconButton name="undo" label="Undo" />
      <IconButton name="redo" label="Redo" className="w-[76px] text-[#4a4e59]" />
      <div className="flex-1" />
      <IconButton name="frame" label="Layout setup" />
      <button className="w-[131px] shrink-0 leading-[30px]">
        <span className="block">0001</span>
        <span className="block text-[27px] text-[#2962ff]">Save</span>
      </button>
      <MoreButton label="Manage layouts" />
      <Separator />
      <IconButton name="quickSearch" label="Quick search" />
      <IconButton name="hexagon" label="Settings" />
      <IconButton name="fullscreen" label="Fullscreen" />
      <IconButton name="camera" label="Snapshot" />
      <button className="mx-2 h-14 w-[142px] shrink-0 rounded-full bg-[#2962ff] text-[27px] font-medium text-white">Publish</button>
    </div>
  );
}

const leftTools: IconName[][] = [
  ["cursor", "ray", "fib", "pattern", "forecast", "arrow", "comment", "smiley"],
  ["ruler", "zoomIn"],
  ["magnet", "pencilLock", "lock", "eyeBrush"],
  ["trash"],
];

function LeftBar() {
  return (
    <aside className="flex w-[102px] shrink-0 flex-col items-center rounded-tr-lg bg-[#121621] pb-9 pr-0.5 pt-3">
      {leftTools.map((group, i) => (
        <div key={group[0]} className="flex flex-col items-center">
          {i > 0 && <span className="my-3 h-0.5 w-[72px] bg-[#434651]" />}
          {group.map((name) => (
            <IconButton key={name} name={name} label={name} className={clsx("h-[72px] w-[72px]", name === "cursor" && "text-[#2962ff]")} />
          ))}
        </div>
      ))}
      <button aria-label="Favorites" className="mt-auto flex size-[60px] items-center justify-center rounded-lg bg-[#2962ff]">
        <Icon>{icons.star}</Icon>
      </button>
    </aside>
  );
}

const rightTop: IconName[] = ["list", "alarm", "layers", "flame", "bulb"];
const rightMiddle: IconName[] = ["chat", "bulbSignal"];
const rightBottom: IconName[] = ["calendar", "help"];

function RightBar() {
  return (
    <aside className="flex w-[88px] shrink-0 flex-col items-center rounded-tl-lg bg-[#121621] pb-1 pl-1">
      {rightTop.map((name) => (
        <IconButton key={name} name={name} label={name} className="h-[92px] w-full" />
      ))}
      <span className="my-3 h-0.5 w-[66px] shrink-0 bg-[#434651]" />
      {rightMiddle.map((name) => (
        <IconButton key={name} name={name} label={name} className="h-[90px] w-full" />
      ))}
      <div className="mt-auto w-full">
        {rightBottom.map((name) => (
          <IconButton key={name} name={name} label={name} className="h-[86px] w-full" />
        ))}
      </div>
    </aside>
  );
}

function Sparkles({ x, y }: { x: number; y: number }) {
  const star = (cx: number, cy: number, rx: number, ry: number) =>
    `M${cx} ${cy - ry}q${rx * 0.15} ${ry * 0.85} ${rx} ${ry}q${-rx * 0.85} ${ry * 0.15} ${-rx} ${ry}q${-rx * 0.15} ${-ry * 0.85} ${-rx} ${-ry}q${rx * 0.85} ${-ry * 0.15} ${rx} ${-ry}Z`;
  return <path d={star(x, y, 16, 18) + star(x - 17, y - 11, 6, 6) + star(x - 11, y + 12, 6, 7)} fill="#ffb52e" stroke="#ffb52e" />;
}

function CandleShape({ candle, x }: { candle: Candle; x: number }) {
  const [dir, high, top, bottom, low] = candle;
  const up = dir === "u";
  const height = bottom - top;
  return (
    <g>
      <rect x={x - 1} y={high} width="2" height={low - high} fill={up ? "#b2b5be" : "#5b9cf6"} />
      <rect x={x - 4} y={top} width="8" height={height} fill={up ? "#b2b5be" : "#3179f5"} />
      {!up && height > 4 && <rect x={x - 2} y={top + 2} width="4" height={height - 4} fill="#2962ff" />}
    </g>
  );
}

function Chart() {
  return (
    <svg
      viewBox={`${CHART.x} ${CHART.y} ${CHART.w} ${CHART.h}`}
      preserveAspectRatio="none"
      className="absolute inset-0 size-full"
      role="img"
      aria-label="XAUUSD 5 minute candles"
    >
      {[2448, ...priceTicks].map((price) => (
        <rect key={price} x={CHART.x} y={priceY(price) - 1} width={CHART.w} height="2" fill="#2c2f3a" />
      ))}
      {timeTicks.map(({ x }) => (
        <rect key={x} x={x - 1} y={CHART.y} width="2" height={CHART.h} fill="#272b36" />
      ))}
      {circles.map((c) => (
        <circle key={c.x} cx={c.x} cy={c.y} r={c.r} fill="#ff9800" fillOpacity=".07" stroke="#be740f" strokeWidth="4" />
      ))}
      {levels.map((level) => (
        <path key={level.price} d={`M${level.from} ${level.y}H2652`} stroke="#75777e" strokeWidth="4" />
      ))}
      <polyline points={slowAverage} fill="none" stroke="#0f7566" strokeWidth="2" />
      <polyline points={fastAverage} fill="none" stroke="#8a2b38" strokeWidth="2" />
      {candles.map((candle, i) => (
        <CandleShape key={i} candle={candle} x={candleX(i)} />
      ))}
      <Sparkles x={1670} y={802} />
      <Sparkles x={1800} y={630} />
    </svg>
  );
}

const drawingTools: IconName[] = [
  "ray", "vertical", "zigzag", "curve", "comment", "circleTool", "square", "parallel", "fib", "trend", "channel", "arrow",
];

function DrawingToolbar() {
  return (
    <div className="absolute left-[217px] top-0 flex h-[74px] items-center rounded-xl bg-[#1e222d] shadow-lg shadow-black/50">
      <svg viewBox="0 0 16 28" className="ml-4 mr-[17px] h-7 w-4 fill-[#50535e]" aria-hidden="true">
        {[3, 14, 25].map((y) => (
          <g key={y}><circle cx="2.500" cy={y} r="2.200" /><circle cx="13.500" cy={y} r="2.200" /></g>
        ))}
      </svg>
      {drawingTools.map((name) => (
        <IconButton key={name} name={name} label={name} />
      ))}
    </div>
  );
}

function PriceTag({ y, children, className }: { y: number; children: ReactNode; className: string }) {
  return (
    <span
      className={clsx("absolute -left-0.5 -translate-y-1/2 pl-4", className)}
      style={{ top: `${((y - CHART.y) / CHART.h) * 100}%` }}
    >
      {children}
    </span>
  );
}

function PriceAxis() {
  return (
    <div className="relative w-[132px] shrink-0 border-l-2 border-[#2a2e39] text-2xl leading-[34px] tabular-nums text-[#a9acb5]">
      {priceTicks
        .filter((price) => !coveredTicks.includes(price))
        .map((price) => (
          <PriceTag key={price} y={priceY(price) + 1} className="w-[124px]">{price}.00</PriceTag>
        ))}
      <div className="absolute inset-x-0 top-0 h-[68px] rounded-tr-lg bg-[#121621] pl-1.5 pr-2 pt-2">
        <div className="relative h-[52px] rounded-lg border-2 border-[#434651] text-[#d1d4dc]">
          <select aria-label="Currency" defaultValue="USD" className="size-full appearance-none bg-transparent pl-1.5 text-[27px] outline-none">
            <option>USD</option>
          </select>
          <Chevron className="pointer-events-none absolute right-2 top-5 w-3 stroke-3" />
        </div>
      </div>
      {levels.map((level) => (
        <PriceTag key={level.price} y={level.y} className="w-[124px] rounded-r bg-white text-black">{level.price}</PriceTag>
      ))}
      <PriceTag y={919} className="w-[94px] rounded-r bg-[#b2b5be] text-[#3c3f49]">00:34</PriceTag>
      <PriceTag y={1118} className="w-[124px] rounded-r bg-[#363a45] py-1 text-white">2421.59</PriceTag>
    </div>
  );
}

function TimeAxis() {
  return (
    <div className="flex h-[58px] shrink-0 border-y-2 border-[#2a2e39] text-2xl tabular-nums text-[#a9acb5]">
      <div className="relative flex-1">
        {timeTicks.map(({ x, label, strong }) => (
          <span
            key={x}
            className={clsx("absolute top-3 -translate-x-1/2", strong && "font-bold text-[#c5c8d0]")}
            style={{ left: `${((x - CHART.x) / CHART.w) * 100}%` }}
          >
            {label}
          </span>
        ))}
        <span className="absolute -top-0.5 right-[39px] flex h-12 w-[316px] items-center justify-center gap-[26px] whitespace-nowrap rounded-b bg-[#363a45] pt-2 text-[22px] text-white">
          <span>Tue 2024-05-21</span>
          <span>09:25</span>
        </span>
      </div>
      <button aria-label="Axis settings" className="flex w-[132px] items-center justify-center border-l-2 border-[#2a2e39] text-[#d1d4dc]">
        <Icon className="size-10">{icons.hexagon}</Icon>
      </button>
    </div>
  );
}

const ranges = ["1D", "5D", "1M", "3M", "6M", "YTD", "1Y", "5Y", "All"];

function RangeBar() {
  return (
    <div className="flex h-[76px] shrink-0 items-center pl-5 pr-[22px] pt-0.5 text-[27px]">
      {ranges.map((range) => (
        <button key={range} className="px-[13px]">{range}</button>
      ))}
      <Separator />
      <IconButton name="gotoDate" label="Go to" />
      <span className="ml-auto">09:49:26 (UTC+9)</span>
    </div>
  );
}

function BottomTabs() {
  return (
    <div className="flex h-[76px] shrink-0 items-center rounded-t-lg bg-[#121621] pl-8 text-[27px]">
      <button className="flex items-center gap-6">
        Forex Screener
        <Chevron />
      </button>
      <button className="ml-[50px]">Pine Editor</button>
      <button className="ml-[66px]">Strategy Tester</button>
      <button className="ml-[66px]">Trading Panel</button>
      <button aria-label="Expand panel" className="ml-auto flex w-[66px] justify-center">
        <Chevron className="w-9 rotate-180 stroke-1" />
      </button>
      <IconButton name="panel" label="Maximize panel" />
    </div>
  );
}

export default function App() {
  return (
    <div className="flex h-screen min-h-[1200px] flex-col bg-black pl-0.5 font-[Inter,'Noto_Sans_CJK_JP',sans-serif]">
      <MenuBar />
      <div className="flex min-h-0 flex-1 flex-col overflow-hidden rounded-[20px] border-2 border-r-0 border-[#3f424b] border-t-[#707072] bg-[#2a2e39] text-[#d1d4dc]">
        <BrowserToolbar />
        <TabBar />
        <Header />
        <div className="flex min-h-0 flex-1 gap-2 pt-2">
          <LeftBar />
          <main className="flex min-w-0 flex-1 flex-col gap-2">
            <section className="flex min-h-0 flex-1 flex-col rounded-lg bg-[#121621]">
              <div className="flex min-h-0 flex-1">
                <div className="relative flex-1">
                  <Chart />
                  <button className="absolute left-[18px] top-3 flex h-[42px] w-[67px] items-center justify-center gap-3 rounded-md border-2 border-[#363a45] bg-[#121621] text-[26px]">
                    <Chevron />
                    2
                  </button>
                  <DrawingToolbar />
                  <div className="absolute bottom-[18px] left-6 flex items-center gap-3 text-[39px] font-bold leading-[48px]">
                    <TradingViewMark className="w-[60px]" />
                    TradingView
                  </div>
                </div>
                <PriceAxis />
              </div>
              <TimeAxis />
              <RangeBar />
            </section>
            <BottomTabs />
          </main>
          <RightBar />
        </div>
      </div>
    </div>
  );
}
